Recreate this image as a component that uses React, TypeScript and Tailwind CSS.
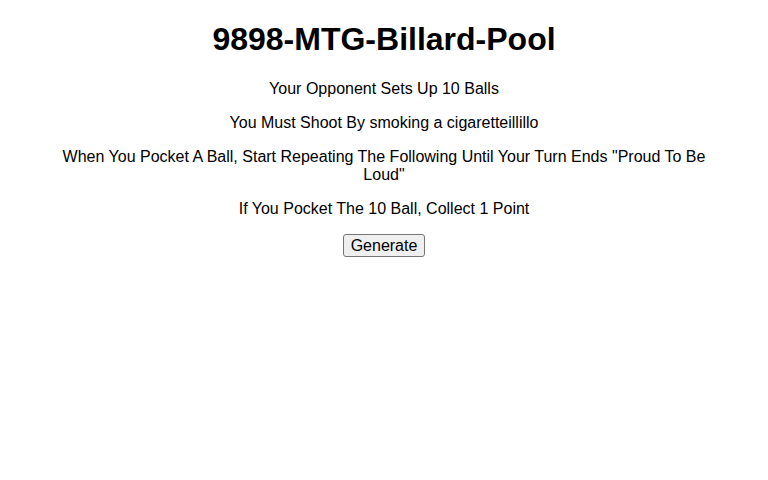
export default function App() {
  return (
    <div
      className="min-h-[480px] bg-white px-[48px] text-center text-black"
      style={{ fontFamily: '"Liberation Sans", Arial, sans-serif' }}
    >
      <h1 className="pt-[21px] text-[32px] font-bold leading-[37px]">9898-MTG-Billard-Pool</h1>
      <p className="mt-[22px] text-base leading-[18px]">Your Opponent Sets Up 10 Balls</p>
      <p className="mt-4 text-base leading-[18px]">You Must Shoot By smoking a cigaretteillillo</p>
      <p className="mt-4 text-base leading-[18px]">
        When You Pocket A Ball, Start Repeating The Following Until Your Turn Ends "Proud To Be Loud"
      </p>
      <p className="mt-4 text-base leading-[18px]">If You Pocket The 10 Ball, Collect 1 Point</p>
      <button className="mt-4 h-[23px] rounded-[3px] border border-[#767676] bg-[#efefef] px-[7px] text-base leading-[18px] text-black">
        Generate
      </button>
    </div>
  );
}
